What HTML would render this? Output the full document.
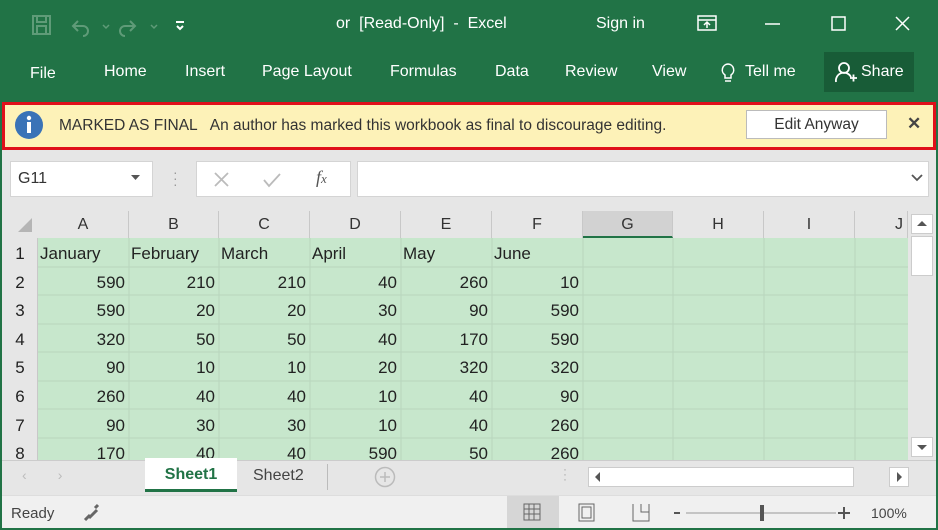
<!DOCTYPE html>
<html><head><meta charset="utf-8"><style>
*{margin:0;padding:0;box-sizing:border-box}
body{width:938px;height:530px;overflow:hidden;font-family:"Liberation Sans",sans-serif;background:#217346;position:relative}
.abs{position:absolute}
.w{color:#fff}
.tab{position:absolute;top:63px;font-size:16px;color:#fff}
#bar{left:2px;top:102px;width:934px;height:48px;background:#fdf2b8;border:3px solid #e0101a}
#main{left:2px;top:150px;width:934px;height:378px;background:#e6e6e6}
.cell{position:absolute;font-size:17px;color:#222;height:28px;line-height:30px}
.ch{position:absolute;top:211px;height:27px;line-height:27px;text-align:center;font-size:16px;color:#333;border-right:1px solid #c8c8c8}
</style></head><body>
<svg class="abs" style="left:30px;top:12px" width="170" height="26">
<rect x="3" y="4" width="17" height="18" fill="none" stroke="#5f9b78" stroke-width="2"/><rect x="7" y="4" width="9" height="6" fill="none" stroke="#5f9b78" stroke-width="2"/><rect x="7" y="14" width="9" height="8" fill="none" stroke="#5f9b78" stroke-width="2"/>
<path d="M48 9 l-5 5 l5 5 M43 14 h10 a5 5 0 0 1 0 10" fill="none" stroke="#5f9b78" stroke-width="2"/>
<path d="M73 13 l3 3 l3 -3" fill="none" stroke="#5f9b78" stroke-width="1.5"/>
<path d="M100 9 l5 5 l-5 5 M105 14 h-10 a5 5 0 0 0 0 10" fill="none" stroke="#5f9b78" stroke-width="2"/>
<path d="M121 13 l3 3 l3 -3" fill="none" stroke="#5f9b78" stroke-width="1.5"/>
<path d="M146 10 h8 M147 14 l3 3 l3 -3" fill="none" stroke="#fff" stroke-width="2"/>
</svg>
<div class="abs w" style="left:336px;top:15px;font-size:16px">or&nbsp; [Read-Only]&nbsp; -&nbsp; Excel</div>
<div class="abs w" style="left:596px;top:15px;font-size:16px">Sign in</div>
<svg class="abs" style="left:696px;top:14px" width="230" height="20">
<rect x="2" y="2" width="18" height="14" fill="none" stroke="#fff" stroke-width="1.5"/><line x1="2" y1="6" x2="20" y2="6" stroke="#fff" stroke-width="1.5"/><path d="M11 14 v-6 M8 11 l3 -3 l3 3" stroke="#fff" fill="none" stroke-width="1.5"/>
<line x1="69" y1="10" x2="84" y2="10" stroke="#fff" stroke-width="1.5"/>
<rect x="136" y="3" width="13" height="13" fill="none" stroke="#fff" stroke-width="1.5"/>
<path d="M200 3 l13 13 M213 3 l-13 13" stroke="#fff" stroke-width="1.5"/>
</svg>
<div class="tab" style="left:30px;top:65px">File</div>
<div class="tab" style="left:104px">Home</div>
<div class="tab" style="left:185px">Insert</div>
<div class="tab" style="left:262px">Page Layout</div>
<div class="tab" style="left:390px">Formulas</div>
<div class="tab" style="left:495px">Data</div>
<div class="tab" style="left:565px">Review</div>
<div class="tab" style="left:652px">View</div>
<svg class="abs" style="left:720px;top:62px" width="16" height="22"><path d="M8 2 a6 6 0 0 0 -3 11 v3 h6 v-3 a6 6 0 0 0 -3 -11z M5 19 h6" fill="none" stroke="#fff" stroke-width="1.5"/></svg>
<div class="tab" style="left:745px">Tell me</div>
<div class="abs" style="left:824px;top:52px;height:40px;background:#185c37;width:90px"></div>
<svg class="abs" style="left:834px;top:61px" width="24" height="24"><circle cx="10" cy="7" r="5" fill="none" stroke="#fff" stroke-width="1.8"/><path d="M2 21 a8 8 0 0 1 15 -5 M16 17 h7 M19.5 13.5 v7" fill="none" stroke="#fff" stroke-width="1.8"/></svg>
<div class="tab" style="left:861px">Share</div>
<div id="bar" class="abs"></div>
<svg class="abs" style="left:13px;top:110px" width="34" height="32"><circle cx="16" cy="15" r="14" fill="#3a73b7"/><rect x="14" y="12" width="4" height="11" fill="#fff"/><circle cx="16" cy="8" r="2.2" fill="#fff"/></svg>
<div class="abs" style="left:59px;top:117px;font-size:15.5px;color:#333">MARKED AS FINAL&nbsp;&nbsp; An author has marked this workbook as final to discourage editing.</div>
<div class="abs" style="left:746px;top:110px;width:141px;height:29px;background:#fff;border:1px solid #bbb;text-align:center;line-height:28px;font-size:15.5px;color:#333">Edit Anyway</div>
<div class="abs" style="left:907px;top:114px;font-size:17px;font-weight:bold;color:#444">✕</div>
<div id="main" class="abs"></div>
<div class="abs" style="left:10px;top:161px;width:143px;height:36px;background:#fff;border:1px solid #d4d4d4"></div>
<div class="abs" style="left:18px;top:170px;font-size:16px;color:#333">G11</div>
<svg class="abs" style="left:130px;top:174px" width="12" height="8"><path d="M1 1 h9 l-4.5 5z" fill="#555"/></svg>
<div class="abs" style="left:173px;top:169px;color:#999;font-size:14px;line-height:6px">·<br>·<br>·</div>
<div class="abs" style="left:196px;top:161px;width:155px;height:36px;background:#fff;border:1px solid #d4d4d4"></div>
<svg class="abs" style="left:212px;top:170px" width="90" height="20"><path d="M3 3 l13 13 M16 3 l-13 13" stroke="#bbb" stroke-width="1.8"/><path d="M52 10 l5 6 l11 -12" stroke="#bbb" stroke-width="1.8" fill="none"/></svg>
<div class="abs" style="left:316px;top:167px;font-family:'Liberation Serif',serif;font-style:italic;font-size:18px;color:#555">f<span style="font-size:13px">x</span></div>
<div class="abs" style="left:357px;top:161px;width:572px;height:36px;background:#fff;border:1px solid #d4d4d4"></div>
<svg class="abs" style="left:911px;top:174px" width="12" height="8"><path d="M1 1 l5 5 l5 -5" stroke="#555" stroke-width="1.8" fill="none"/></svg>
<div class="abs" style="left:38px;top:238px;width:870px;height:222px;background:#c7e7cc"></div>
<div class="abs" style="left:2px;top:238px;width:36px;height:222px;background:#e6e6e6;border-right:1px solid #c8c8c8"></div>
<svg class="abs" style="left:16px;top:216px" width="18" height="18"><path d="M16 2 v14 h-14z" fill="#b5b5b5"/></svg>
<div class="ch" style="left:38px;width:91px">A</div><div class="ch" style="left:129px;width:90px">B</div><div class="ch" style="left:219px;width:91px">C</div><div class="ch" style="left:310px;width:91px">D</div><div class="ch" style="left:401px;width:91px">E</div><div class="ch" style="left:492px;width:91px">F</div><div class="ch" style="left:583px;width:90px;background:#d2d2d2;border-bottom:2px solid #217346">G</div><div class="ch" style="left:673px;width:91px">H</div><div class="ch" style="left:764px;width:91px">I</div><div class="ch" style="left:855px;width:53px;text-align:right;padding-right:4px">J</div>
<svg class="abs" style="left:38px;top:238px" width="870" height="222">
<g stroke="#b9d6bd" stroke-width="1">
<line x1="91" y1="0" x2="91" y2="222"/><line x1="181" y1="0" x2="181" y2="222"/><line x1="272" y1="0" x2="272" y2="222"/><line x1="363" y1="0" x2="363" y2="222"/><line x1="454" y1="0" x2="454" y2="222"/><line x1="545" y1="0" x2="545" y2="222"/><line x1="635" y1="0" x2="635" y2="222"/><line x1="726" y1="0" x2="726" y2="222"/><line x1="817" y1="0" x2="817" y2="222"/>
<line x1="0" y1="29" x2="870" y2="29"/><line x1="0" y1="57" x2="870" y2="57"/><line x1="0" y1="86" x2="870" y2="86"/><line x1="0" y1="114" x2="870" y2="114"/><line x1="0" y1="143" x2="870" y2="143"/><line x1="0" y1="171" x2="870" y2="171"/><line x1="0" y1="200" x2="870" y2="200"/>
</g></svg>
<div id="cells"></div>
<script>
var rows=[["January","February","March","April","May","June"],[590,210,210,40,260,10],[590,20,20,30,90,590],[320,50,50,40,170,590],[90,10,10,20,320,320],[260,40,40,10,40,90],[90,30,30,10,40,260],[170,40,40,590,50,260]];
var xs=[38,129,219,310,401,492,583],h='';
for(var r=0;r<8;r++){var t=239+r*28.6;
h+='<div class="cell" style="left:2px;width:36px;text-align:center;top:'+t+'px">'+(r+1)+'</div>';
for(var c=0;c<6;c++){var v=rows[r][c];
if(r==0)h+='<div class="cell" style="left:'+(xs[c]+2)+'px;top:'+t+'px">'+v+'</div>';
else h+='<div class="cell" style="left:'+xs[c]+'px;width:'+(xs[c+1]-xs[c]-4)+'px;text-align:right;top:'+t+'px">'+v+'</div>';}}
document.getElementById('cells').innerHTML=h;
</script>
<div class="abs" style="left:908px;top:211px;width:28px;height:249px;background:#e6e6e6"></div>
<div class="abs" style="left:911px;top:214px;width:22px;height:20px;background:#fff;border:1px solid #ccc"></div>
<svg class="abs" style="left:916px;top:220px" width="12" height="8"><path d="M1 6 h10 l-5 -5z" fill="#555"/></svg>
<div class="abs" style="left:911px;top:236px;width:22px;height:40px;background:#fff;border:1px solid #ccc"></div>
<div class="abs" style="left:911px;top:437px;width:22px;height:20px;background:#fff;border:1px solid #ccc"></div>
<svg class="abs" style="left:916px;top:444px" width="12" height="8"><path d="M1 1 h10 l-5 5z" fill="#555"/></svg>
<div class="abs" style="left:2px;top:460px;width:934px;height:35px;background:#e6e6e6;border-top:1px solid #ccc"></div>
<div class="abs" style="left:22px;top:467px;color:#bbb;font-size:14px">‹&nbsp;&nbsp;&nbsp;&nbsp;&nbsp;&nbsp;&nbsp;&nbsp;›</div>
<div class="abs" style="left:145px;top:458px;width:92px;height:34px;background:#fff;border-bottom:3px solid #217346;text-align:center;line-height:34px;font-size:16px;font-weight:bold;color:#217346">Sheet1</div>
<div class="abs" style="left:253px;top:467px;font-size:16px;color:#444">Sheet2</div>
<div class="abs" style="left:327px;top:464px;width:1px;height:26px;background:#bbb"></div>
<svg class="abs" style="left:374px;top:466px" width="22" height="22"><circle cx="11" cy="11" r="9.5" fill="none" stroke="#bbb" stroke-width="1.5"/><path d="M11 6 v10 M6 11 h10" stroke="#bbb" stroke-width="1.5"/></svg>
<div class="abs" style="left:563px;top:467px;color:#aaa;font-size:12px;line-height:5px">·<br>·<br>·</div>
<div class="abs" style="left:588px;top:467px;width:266px;height:20px;background:#fff;border:1px solid #ccc"></div>
<svg class="abs" style="left:594px;top:472px" width="8" height="10"><path d="M6 0 v10 l-5 -5z" fill="#555"/></svg>
<div class="abs" style="left:889px;top:467px;width:20px;height:20px;background:#fff;border:1px solid #ccc"></div>
<svg class="abs" style="left:896px;top:472px" width="8" height="10"><path d="M1 0 v10 l5 -5z" fill="#555"/></svg>
<div class="abs" style="left:2px;top:495px;width:934px;height:33px;background:#f0f0f0;border-top:1px solid #ddd"></div>
<div class="abs" style="left:11px;top:505px;font-size:15px;color:#444">Ready</div>
<svg class="abs" style="left:82px;top:503px" width="20" height="20"><path d="M3 17 l5 -5 M7 15 l5 -5 M11 11 l4 -4 M13 5 l3 -3" stroke="#666" stroke-width="3"/></svg>
<div class="abs" style="left:507px;top:496px;width:52px;height:32px;background:#d6d6d6"></div>
<svg class="abs" style="left:522px;top:502px" width="140" height="22">
<g stroke="#666" stroke-width="1" fill="none"><rect x="2" y="2" width="16" height="16"/><path d="M7 2v16M12 2v16M2 7h16M2 12h16"/>
<rect x="57" y="2" width="15" height="17"/><rect x="60" y="5" width="9" height="11"/>
<path d="M111 2 v17 h16 v-17 M119 2 v8 h8"/></g>
</svg>
<svg class="abs" style="left:672px;top:502px" width="190" height="22"><line x1="2" y1="11" x2="8" y2="11" stroke="#555" stroke-width="2"/><line x1="14" y1="11" x2="164" y2="11" stroke="#999"/><rect x="88" y="3" width="4" height="16" fill="#555"/><path d="M166 11 h12 M172 5 v12" stroke="#555" stroke-width="2"/></svg>
<div class="abs" style="left:871px;top:505px;font-size:14px;color:#444">100%</div>
</body></html>
